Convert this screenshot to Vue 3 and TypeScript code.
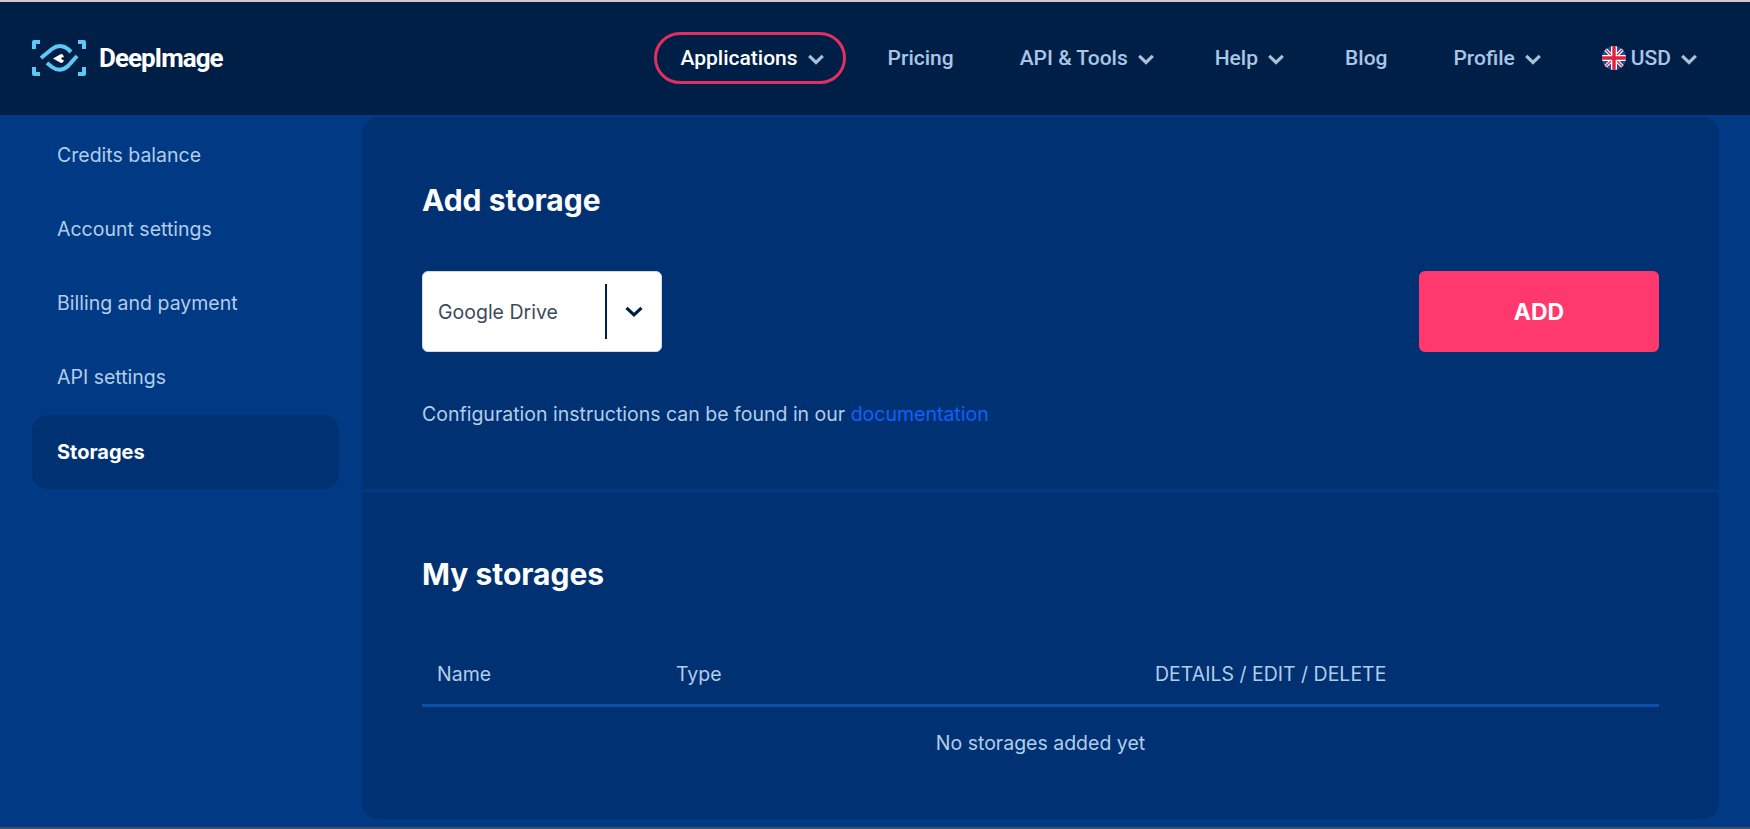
<script setup lang="ts">
interface NavItem {
  label: string
  caret: boolean
  active?: boolean
}

const navItems: NavItem[] = [
  { label: 'Applications', caret: true, active: true },
  { label: 'Pricing', caret: false },
  { label: 'API & Tools', caret: true },
  { label: 'Help', caret: true },
  { label: 'Blog', caret: false },
  { label: 'Profile', caret: true },
]

const sideItems = ['Credits balance', 'Account settings', 'Billing and payment', 'API settings', 'Storages']
</script>

<template>
  <div class="page">
    <header class="topbar">
      <div class="logo">
        <svg class="logo-icon" width="54" height="36" viewBox="0 0 54 36" fill="none" stroke="#5cc8f5" stroke-width="4">
          <path d="M8 2H2V9M46 2H52V9M8 34H2V27M46 34H52V27" stroke-linejoin="round" />
          <path d="M9 18L20 9Q28 3 36 9L39 12" />
          <path d="M45 16L36 26Q28 33 20 27L15 23" />
          <path d="M21 18.500L29 14C31 14 32 16 32 18.500C32 21 31 23 29 23Z" fill="#fff" stroke="none" />
          <circle cx="31" cy="18.500" r="1.600" fill="#001f47" stroke="none" />
        </svg>
        <span class="logo-text">DeepImage</span>
      </div>
      <nav class="nav">
        <a v-for="item in navItems" :key="item.label" class="nav-item" :class="{ active: item.active, 'has-caret': item.caret }">
          {{ item.label }}
          <svg v-if="item.caret" class="caret" width="16" height="11" viewBox="0 0 16 11" fill="none" stroke-width="3.200">
            <path d="M1.200 1.800L8 8.400L14.800 1.800" />
          </svg>
        </a>
        <a class="nav-item has-caret currency">
          <svg class="flag" width="24" height="24" viewBox="0 0 24 24">
            <defs>
              <clipPath id="flag-clip"><circle cx="12" cy="12" r="12" /></clipPath>
            </defs>
            <g clip-path="url(#flag-clip)">
              <rect width="24" height="24" fill="#1a4fa8" />
              <path d="M0 0L24 24M24 0L0 24" stroke="#fff" stroke-width="3.400" />
              <path d="M0 0L24 24M24 0L0 24" stroke="#e0213d" stroke-width="1.300" />
              <path d="M12 0V24M0 12H24" stroke="#fff" stroke-width="6" />
              <path d="M12 0V24M0 12H24" stroke="#e0213d" stroke-width="3.400" />
            </g>
          </svg>
          <span class="currency-code">USD</span>
          <svg class="caret" width="16" height="11" viewBox="0 0 16 11" fill="none" stroke-width="3.200">
            <path d="M1.200 1.800L8 8.400L14.800 1.800" />
          </svg>
        </a>
      </nav>
    </header>

    <div class="main">
      <aside class="sidebar">
        <a v-for="item in sideItems" :key="item" class="side-item" :class="{ selected: item === 'Storages' }">{{ item }}</a>
      </aside>

      <section class="panel">
        <div class="block add-block">
          <h2 class="title">Add storage</h2>
          <div class="controls">
            <div class="select">
              <span class="select-value">Google Drive</span>
              <span class="select-sep"></span>
              <svg class="select-caret" width="18" height="11" viewBox="0 0 18 11" fill="none" stroke="#001f47" stroke-width="3.200">
                <path d="M1.500 1.800L9 8.800L16.500 1.800" />
              </svg>
            </div>
            <button class="add-btn" type="button">ADD</button>
          </div>
          <p class="hint">Configuration instructions can be found in our <a class="doc-link">documentation</a></p>
        </div>

        <div class="block list-block">
          <h2 class="title">My storages</h2>
          <div class="table-head">
            <span>Name</span>
            <span>Type</span>
            <span>DETAILS / EDIT / DELETE</span>
          </div>
          <div class="table-empty">No storages added yet</div>
        </div>
      </section>
    </div>
  </div>
</template>

<style>
html,
body {
  margin: 0;
  background: #003a85;
}
</style>

<style scoped>
.page {
  width: 1750px;
  height: 829px;
  display: flex;
  flex-direction: column;
  box-sizing: border-box;
  overflow: hidden;
  background: #003a85;
  border-top: 2px solid #d9c3cc;
  border-bottom: 2px solid #3c4f66;
  font-family: Inter, "Noto Sans", sans-serif;
}

.topbar {
  height: 113px;
  flex: none;
  display: flex;
  align-items: center;
  justify-content: space-between;
  box-sizing: border-box;
  padding: 0 33px 1px 32px;
  background: #001f47;
}

.logo {
  display: flex;
  align-items: center;
  gap: 13px;
}

.logo-text {
  font-family: Roboto, sans-serif;
  font-weight: 700;
  font-size: 26px;
  letter-spacing: -1px;
  color: #fff;
}

.nav {
  display: flex;
  align-items: center;
  gap: 15px;
  font-family: Roboto, sans-serif;
  font-weight: 500;
  font-size: 21px;
  color: #a9c6e6;
}

.nav-item {
  height: 52px;
  display: flex;
  align-items: center;
  gap: 10px;
  box-sizing: border-box;
  padding: 0 22px 0 23px;
  border: 3px solid transparent;
  border-radius: 26px;
}

.nav-item.has-caret {
  padding-right: 17px;
}

.nav-item.active {
  color: #fff;
  border-color: #e0305f;
  padding-right: 19px;
  margin-right: 1px;
}

.caret {
  stroke: #a9c0d8;
  margin-top: 2px;
}

.currency {
  gap: 0;
}

.currency-code {
  margin: 0 10px 0 5px;
}

.main {
  flex: 1;
  display: flex;
  min-height: 0;
  padding-top: 2px;
}

.sidebar {
  width: 362px;
  flex: none;
  display: flex;
  flex-direction: column;
  box-sizing: border-box;
  padding: 2px 23px 0 32px;
}

.side-item {
  height: 74px;
  display: flex;
  align-items: center;
  box-sizing: border-box;
  padding: 0 0 2px 25px;
  border-radius: 16px;
  font-size: 19.500px;
  color: #b3cdea;
}

.side-item.selected {
  padding-bottom: 0;
  background: #003173;
  color: #fff;
  font-size: 20px;
  font-weight: 700;
}

.panel {
  width: 1357px;
  height: 702px;
  display: flex;
  flex-direction: column;
  gap: 3px;
  border-radius: 16px;
  overflow: hidden;
}

.block {
  background: #003173;
  box-sizing: border-box;
  padding: 0 60px;
}

.add-block {
  height: 372px;
  padding-top: 66px;
}

.list-block {
  flex: 1;
  padding-top: 65px;
}

.title {
  margin: 0;
  font-size: 30px;
  line-height: 34px;
  font-weight: 700;
  color: #fff;
}

.controls {
  margin-top: 54px;
  display: flex;
  justify-content: space-between;
}

.select {
  width: 240px;
  height: 81px;
  display: flex;
  align-items: center;
  box-sizing: border-box;
  padding-left: 15px;
  background: #fff;
  border: 1px solid #d5dae2;
  border-radius: 6px;
}

.select-value {
  width: 167px;
  font-size: 19.500px;
  color: #3d4a5c;
}

.select-sep {
  width: 2px;
  height: 55px;
  background: #001f47;
}

.select-caret {
  margin-left: 18px;
}

.add-btn {
  width: 240px;
  height: 81px;
  border: 0;
  border-radius: 6px;
  background: #ff386e;
  color: #fff;
  font-family: inherit;
  font-size: 23px;
  font-weight: 700;
}

.hint {
  margin: 50px 0 0;
  font-size: 19.500px;
  line-height: 24px;
  color: #b3cdea;
}

.doc-link {
  color: #0f62fe;
}

.table-head {
  margin-top: 53px;
  height: 63px;
  display: grid;
  grid-template-columns: 239px 479px 1fr;
  align-items: center;
  box-sizing: border-box;
  padding: 0 15px;
  border-bottom: 3px solid #0d50aa;
  font-size: 19.500px;
  color: #b3cdea;
}

.table-empty {
  height: 72px;
  display: flex;
  align-items: center;
  justify-content: center;
  font-size: 19.500px;
  color: #b3cdea;
}
</style>
